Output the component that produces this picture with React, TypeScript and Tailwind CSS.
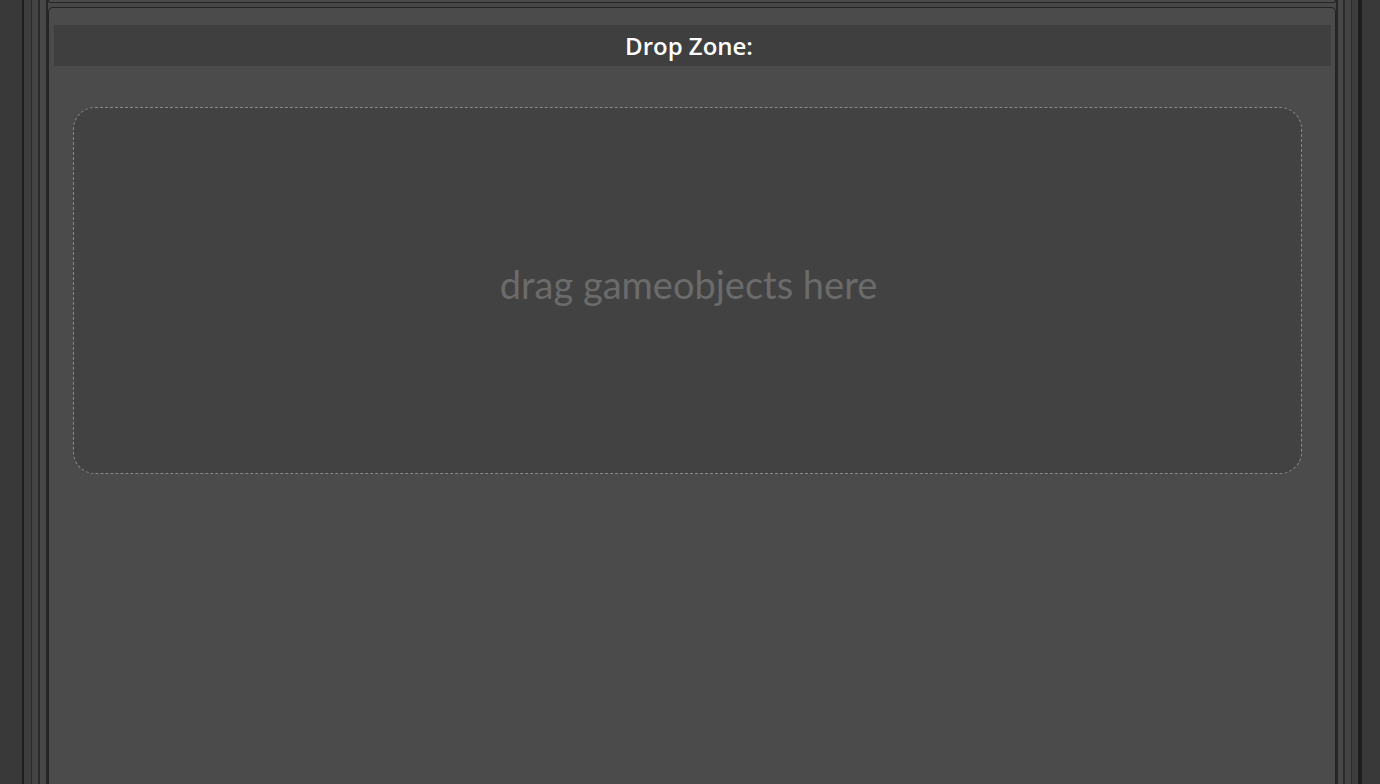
import React from 'react';

const App: React.FC = () => {
  return (
    <div className="h-[784px] w-[1380px] overflow-hidden bg-[#393939] flex pl-[22px] pr-[18px]">
      {/* outer frame */}
      <div className="flex-1 flex border-l-2 border-r-4 border-[#1d1d1d] bg-[#3d3d3d] pl-[7px] pr-[6px]">
        <div className="flex-1 flex border-x border-[#2b2b2b] bg-[#444444] px-[6px]">
          <div className="flex-1 flex border-x-2 border-[#2a2a2a] bg-[#474747] pl-[6px] pr-[5px]">
            <div className="flex-1 flex flex-col border-x-2 border-[#262626]">
              {/* bottom edge of the panel above */}
              <div className="h-[3px] border-x border-b border-[#242424] rounded-b-[5px] bg-[#4b4b4b]" />
              {/* Drop zone panel */}
              <div className="mt-[4px] flex-1 flex flex-col border border-b-0 border-[#242424] rounded-t-[5px] bg-[#4b4b4b] pt-[17px] pl-[5px] pr-[4px]">
                <div className="h-[41px] bg-[#3f3f3f] flex items-center justify-center pr-[7px] pt-[1px]">
                  <span className="font-['Open_Sans',sans-serif] font-semibold text-[24px] text-white">
                    Drop Zone:
                  </span>
                </div>
                <div className="mt-[41px] ml-[19px] w-[1229px] h-[367px] rounded-[22px] border border-dashed border-[#8a8a8a] bg-[#424242] flex items-center justify-center pb-[12px] pl-[2px]">
                  <span className="font-['Lato',sans-serif] text-[38px] text-[#6b6b6b]">
                    drag gameobjects here
                  </span>
                </div>
              </div>
            </div>
          </div>
        </div>
      </div>
    </div>
  );
};

export default App;
